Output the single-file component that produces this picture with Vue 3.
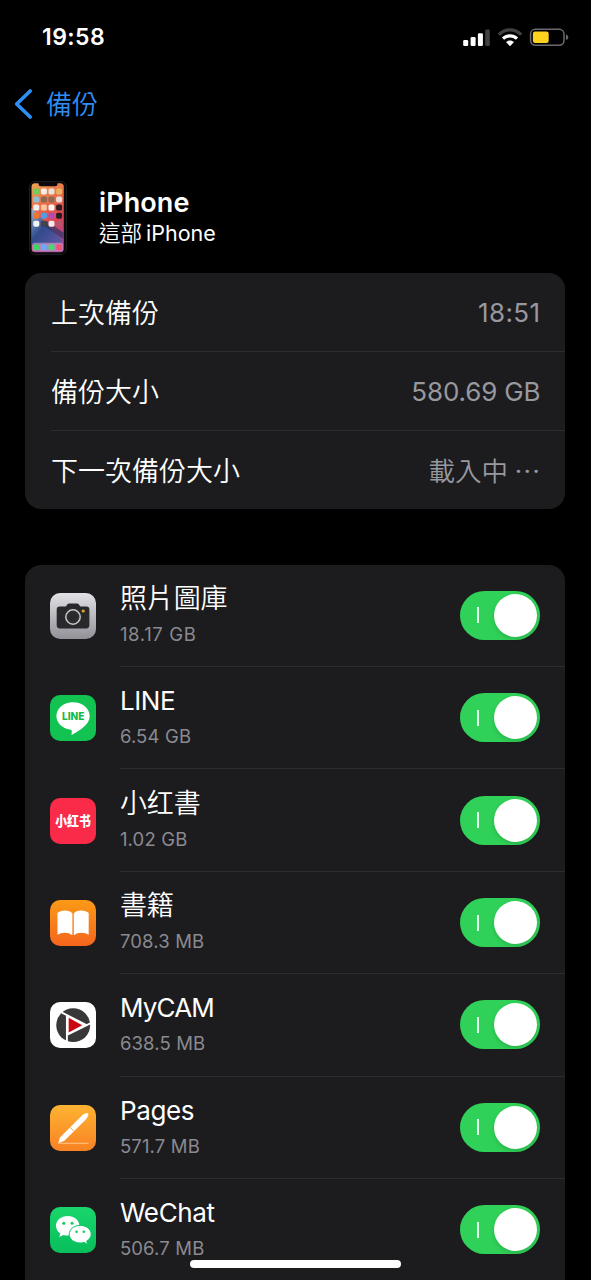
<script setup>
const info = [
  { label: '上次備份', value: '18:51', kind: 'time' },
  { label: '備份大小', value: '580.69 GB', kind: 'size' },
  { label: '下一次備份大小', value: '載入中 …', kind: 'cjk' },
]

const apps = [
  { id: 'photos', name: '照片圖庫', size: '18.17 GB' },
  { id: 'line', name: 'LINE', size: '6.54 GB' },
  { id: 'xhs', name: '小红書', size: '1.02 GB' },
  { id: 'books', name: '書籍', size: '708.3 MB' },
  { id: 'mycam', name: 'MyCAM', size: '638.5 MB' },
  { id: 'pages', name: 'Pages', size: '571.7 MB' },
  { id: 'wechat', name: 'WeChat', size: '506.7 MB' },
]

const tiles = [
  '#6fcf5d', '#f4eee8', '#e9e2dc', '#e8b35e',
  '#8abfd8', '#8b6755', '#8d6a51', '#e5dfda',
  '#f1eeee', '#f9c49c', '#fbf5f2', '#302023',
  '#f17636', '#4a9ee8', '#b04bb8', '#241c24',
  '#f3f3f5', '#43434c', '#f5e8e9', '#b65668',
]
const dock = ['#41d465', '#6fa8f5', '#45d873', '#f0527b']
</script>

<template>
  <main class="screen">
    <header class="status">
      <span class="clock">19:58</span>
      <svg class="status-icons" width="108" height="22" viewBox="0 0 108 22">
        <rect x="2.2" y="13" width="5" height="6" rx="1.2" fill="#fff" />
        <rect x="9.6" y="10" width="5" height="9" rx="1.2" fill="#fff" />
        <rect x="16.9" y="6.3" width="5" height="12.7" rx="1.2" fill="#fff" />
        <rect x="24.2" y="2.6" width="4.6" height="16.4" rx="1.2" fill="#414143" />
        <path d="M37.8 7.6C44.3 1.2 53.7 1.2 60.2 7.6" fill="none" stroke="#414143" stroke-width="3.2" />
        <path d="M42 11.7C46.1 7.9 51.9 7.9 56 11.7" fill="none" stroke="#fff" stroke-width="3.2" />
        <path d="M45 15C47.3 12.9 50.7 12.9 53 15L49 19.2Z" fill="#fff" />
        <rect x="69.6" y="2.3" width="33.4" height="16" rx="4.8" fill="none" stroke="#6b6b6e" stroke-width="1.5" />
        <path d="M105 7.5C108 8.5 108 12.1 105 13.1Z" fill="#6b6b6e" />
        <rect x="71.9" y="4.6" width="15.8" height="11.4" rx="2.2" fill="#ffd21f" />
      </svg>
    </header>

    <nav class="back">
      <svg width="20" height="32" viewBox="0 0 20 32">
        <path d="M17.2 3L3.7 16L17.2 29" fill="none" stroke="#2f8df5" stroke-width="3.7" stroke-linecap="round" stroke-linejoin="round" />
      </svg>
      <span>備份</span>
    </nav>

    <section class="device">
      <svg class="phone" width="38" height="74" viewBox="0 0 38 74">
        <defs>
          <linearGradient id="wall" x1="0" y1="0" x2="0.3" y2="1">
            <stop offset="0" stop-color="#eda552" />
            <stop offset="0.35" stop-color="#ea7348" />
            <stop offset="0.7" stop-color="#dc4353" />
            <stop offset="1" stop-color="#a64a94" />
          </linearGradient>
          <linearGradient id="ridge" x1="0" y1="0" x2="1" y2="1">
            <stop offset="0" stop-color="#9db4ce" />
            <stop offset="0.45" stop-color="#304b8c" />
            <stop offset="1" stop-color="#6757a5" />
          </linearGradient>
        </defs>
        <rect x="0.5" y="0.5" width="37" height="73" rx="5.5" fill="#09090b" stroke="#1c1b1f" />
        <rect x="2.5" y="2.3" width="32.3" height="69" rx="3.6" fill="url(#wall)" />
        <path d="M2.5 27C10 35 18 44 34 60L31 62L2.5 64Z" fill="url(#ridge)" />
        <path d="M14 44L34 58L34.8 52L18 40Z" fill="#283564" opacity="0.7" />
        <path d="M9.5 1.5H28.5V3Q28.5 5.3 26.2 5.3H11.8Q9.5 5.3 9.5 3Z" fill="#0b090b" />
        <rect v-for="(c, i) in tiles" :key="i" :x="4.3 + (i % 4) * 7.6" :y="7.4 + Math.floor(i / 4) * 8.1" width="6" height="6" rx="1.7" :fill="c" />
        <rect x="3.2" y="61.8" width="30.8" height="8.7" rx="2.5" fill="#c99bce" opacity="0.65" />
        <rect v-for="(c, i) in dock" :key="c" :x="4.3 + i * 7.6" y="63.2" width="6" height="6" rx="1.7" :fill="c" />
      </svg>
      <div class="device-text">
        <h1>iPhone</h1>
        <p>這部<span>iPhone</span></p>
      </div>
    </section>

    <section class="card info">
      <div v-for="row in info" :key="row.label" class="info-row">
        <span class="info-label">{{ row.label }}</span>
        <span class="info-value" :class="row.kind">{{ row.value }}</span>
      </div>
    </section>

    <section class="card apps">
      <div v-for="app in apps" :key="app.id" class="app-row">
        <svg class="app-icon" width="46" height="46" viewBox="0 0 46 46">
          <template v-if="app.id === 'photos'">
            <defs>
              <linearGradient id="silver" x1="0" y1="0" x2="0" y2="1">
                <stop offset="0" stop-color="#e2e1e6" />
                <stop offset="1" stop-color="#929197" />
              </linearGradient>
            </defs>
            <rect width="46" height="46" rx="10" fill="url(#silver)" />
            <path d="M9.5 13.6H15.3C16.5 13.6 17.1 10.4 18.9 10.4H27.3C29.1 10.4 29.7 13.6 30.9 13.6H36.5Q39.4 13.6 39.4 16.5V32.3Q39.4 35.4 36.3 35.4H9.8Q6.7 35.4 6.7 32.3V16.5Q6.7 13.6 9.5 13.6Z" fill="#29282b" />
            <circle cx="23" cy="24" r="7.2" fill="#29282b" stroke="#c8c7ca" stroke-width="1.5" />
            <circle cx="23" cy="24" r="5" fill="none" stroke="#3a393b" stroke-width="0.6" />
            <circle cx="33.2" cy="18" r="1.6" fill="#e7a62b" />
          </template>
          <template v-else-if="app.id === 'line'">
            <rect width="46" height="46" rx="10" fill="#13c351" />
            <path d="M23 7.2C13.8 7.2 6.4 13.3 6.4 21C6.4 27.9 12.3 33.4 20 34.6C22.2 35.1 22 36.3 21.5 39.1C21.5 40.2 22.3 39.7 23.2 39.1C29 35.6 39.7 30 39.7 21C39.7 13.3 32.2 7.2 23 7.2Z" fill="#fff" />
            <text x="12" y="24.9" class="line-logo" textLength="22.3" lengthAdjust="spacingAndGlyphs">LINE</text>
          </template>
          <template v-else-if="app.id === 'xhs'">
            <rect width="46" height="46" rx="10" fill="#fa2a49" />
            <text x="5.2" y="28.4" class="xhs-logo" textLength="35.6" lengthAdjust="spacingAndGlyphs">小红书</text>
          </template>
          <template v-else-if="app.id === 'books'">
            <defs>
              <linearGradient id="orange" x1="0" y1="0" x2="0" y2="1">
                <stop offset="0" stop-color="#fb9a17" />
                <stop offset="1" stop-color="#f5651d" />
              </linearGradient>
            </defs>
            <rect width="46" height="46" rx="10" fill="url(#orange)" />
            <path d="M22.4 13.4C20.4 9.8 10.8 9.2 7.5 13V34.7C11.5 31.9 18.6 32 22.4 35.2ZM23.8 13.4C25.8 9.8 35.4 9.2 38.7 13V34.7C34.7 31.9 27.6 32 23.8 35.2Z" fill="#fff" />
          </template>
          <template v-else-if="app.id === 'mycam'">
            <rect width="46" height="46" rx="10" fill="#fff" />
            <circle cx="23.2" cy="23.2" r="16.9" fill="#383839" />
            <path d="M16.9 41V13.1M11.5 10.4L36 22.8M17 33L41.3 20.8" fill="none" stroke="#fff" stroke-width="1.9" />
            <path d="M17 12.9L36.2 23.2L17 33Z" fill="#fff" />
            <path d="M18.7 15.8L32.2 23.3L18.7 30.4Z" fill="#cb0712" />
          </template>
          <template v-else-if="app.id === 'pages'">
            <defs>
              <linearGradient id="amber" x1="0" y1="0" x2="0" y2="1">
                <stop offset="0" stop-color="#fdb332" />
                <stop offset="1" stop-color="#f98224" />
              </linearGradient>
            </defs>
            <rect width="46" height="46" rx="10" fill="url(#amber)" />
            <path d="M8 38.3H38.4" stroke="#ffc27f" stroke-width="1.1" />
            <path d="M8.2 38L10.2 32.2L31.5 10.9C34.5 8.1 37.4 7.5 38.1 8.2C38.8 9.1 37.8 12.4 35.3 15.1L14.1 35.9Z" fill="#fff" />
            <path d="M20.2 22.3L23.8 26" stroke="#f99a2a" stroke-width="0.9" />
          </template>
          <template v-else>
            <defs>
              <linearGradient id="green" x1="0" y1="0" x2="0" y2="1">
                <stop offset="0" stop-color="#19d66c" />
                <stop offset="1" stop-color="#08be5b" />
              </linearGradient>
            </defs>
            <rect width="46" height="46" rx="10" fill="url(#green)" />
            <path d="M17.7 9.1C11 9.1 6 13.4 6 18.8C6 22 7.7 24.8 10.3 26.6L9.3 30L13.3 27.9C14.7 28.3 16.2 28.6 17.7 28.6C24.3 28.6 29.4 24.3 29.4 18.8C29.4 13.4 24.3 9.1 17.7 9.1Z" fill="#fff" />
            <circle cx="13.8" cy="16.3" r="1.5" fill="#15c861" />
            <circle cx="22" cy="16.3" r="1.5" fill="#15c861" />
            <path d="M30.2 18.4C24 18.4 19.2 22.3 19.2 27.2C19.2 32.1 24 36 30.2 36C31.5 36 32.8 35.8 34 35.4L37.6 37.3L36.7 34C39.4 32.4 41.2 30 41.2 27.2C41.2 22.3 36.3 18.4 30.2 18.4Z" fill="#fff" stroke="#0fc761" stroke-width="1" />
            <circle cx="26.6" cy="24.8" r="1.3" fill="#15c861" />
            <circle cx="33.8" cy="24.8" r="1.3" fill="#15c861" />
          </template>
        </svg>
        <div class="app-body">
          <div class="app-text">
            <span class="app-name" :class="app.id">{{ app.name }}</span>
            <span class="app-size" :class="app.id">{{ app.size }}</span>
          </div>
          <span class="toggle"><i class="bar"></i><i class="knob"></i></span>
        </div>
      </div>
    </section>
    <div class="home-bar"></div>
  </main>
</template>

<style>
body {
  background: #000;
}
</style>

<style scoped>
.screen {
  position: relative;
  box-sizing: border-box;
  width: 591px;
  height: 1280px;
  overflow: hidden;
  background: #000;
  color: #fff;
  font-family: Inter, "Noto Sans CJK TC", sans-serif;
}

.status {
  display: flex;
  justify-content: space-between;
  align-items: center;
  height: 74px;
  padding: 0 22px 0 42px;
}

.clock {
  font-size: 23px;
  font-weight: 600;
  letter-spacing: 0.45px;
}

.status-icons {
  margin-top: 1px;
}

.back {
  display: flex;
  align-items: center;
  height: 60px;
  padding-left: 13px;
  gap: 13px;
  color: #2f8df5;
  font-size: 26px;
  font-weight: 350;
}

.back span {
  margin-top: -3px;
}

.device {
  display: flex;
  gap: 32px;
  height: 91px;
  padding: 47px 0 0 29px;
}

.device-text {
  padding-top: 6px;
}

h1 {
  margin: 0;
  font-size: 27px;
  font-weight: 600;
  line-height: 32px;
  letter-spacing: 0.1px;
}

p {
  margin: 0;
  font-size: 21.5px;
  font-weight: 350;
  line-height: 28px;
}

p span {
  margin-left: 4px;
  font-weight: 400;
}

.card {
  width: 540px;
  margin-left: 25.4px;
  border-radius: 16px;
  background: #1c1c1e;
}

.info {
  margin-top: 1px;
  height: 236px;
}

.info-row {
  display: flex;
  box-sizing: border-box;
  align-items: center;
  justify-content: space-between;
  height: 78.8px;
  margin-left: 25.5px;
  padding-right: 25px;
  border-bottom: 1.5px solid #2c2c2e;
}

.info-row:last-child {
  border-bottom: 0;
}

.info-label {
  font-size: 27px;
  font-weight: 350;
}

.info-value {
  padding-top: 2px;
  color: #98989f;
  font-size: 26px;
}

.info-value.size {
  letter-spacing: -0.15px;
}

.info-value.time {
  letter-spacing: 0.35px;
}

.info-value.cjk {
  padding-top: 0;
  font-family: "Noto Sans CJK TC", sans-serif;
  font-weight: 350;
  font-size: 26.5px;
}

.apps {
  margin-top: 55.5px;
  padding-bottom: 30px;
}

.app-row {
  display: flex;
  align-items: center;
  height: 102.45px;
  padding-left: 25px;
  gap: 23.5px;
}

.app-icon {
  flex: none;
}

.line-logo {
  font: 800 10.5px Inter, sans-serif;
  fill: #13b94d;
}

.xhs-logo {
  font: 900 13.5px "Noto Sans CJK SC", sans-serif;
  fill: #fff;
}

.app-body {
  display: flex;
  box-sizing: border-box;
  flex: 1;
  align-items: center;
  justify-content: space-between;
  height: 100%;
  padding-right: 25px;
  border-bottom: 1.5px solid #2c2c2e;
}

.app-text {
  display: flex;
  flex-direction: column;
}

.app-name {
  font-size: 26px;
  line-height: 38px;
  letter-spacing: -0.35px;
}

.app-name.mycam {
  letter-spacing: -0.8px;
}

.app-name.photos,
.app-name.xhs,
.app-name.books {
  font-size: 27px;
  font-weight: 350;
  letter-spacing: -0.1px;
}

.app-size {
  color: #8a8a90;
  font-size: 18.5px;
  line-height: 33px;
  letter-spacing: 0.15px;
}

.app-size.photos {
  letter-spacing: 0.65px;
}

.toggle {
  display: flex;
  box-sizing: border-box;
  align-items: center;
  justify-content: space-between;
  width: 80.5px;
  height: 49px;
  padding: 0 3px 0 17.5px;
  border-radius: 25px;
  background: #30d158;
}

.bar {
  width: 2px;
  height: 16px;
  background: #e4ffeb;
}

.knob {
  width: 43px;
  height: 43px;
  border-radius: 50%;
  background: #fff;
  box-shadow: 0 2px 4px rgba(0, 0, 0, 0.15);
}

.home-bar {
  position: absolute;
  bottom: 12.5px;
  left: 190px;
  width: 211px;
  height: 8px;
  border-radius: 4px;
  background: #fff;
}
</style>
